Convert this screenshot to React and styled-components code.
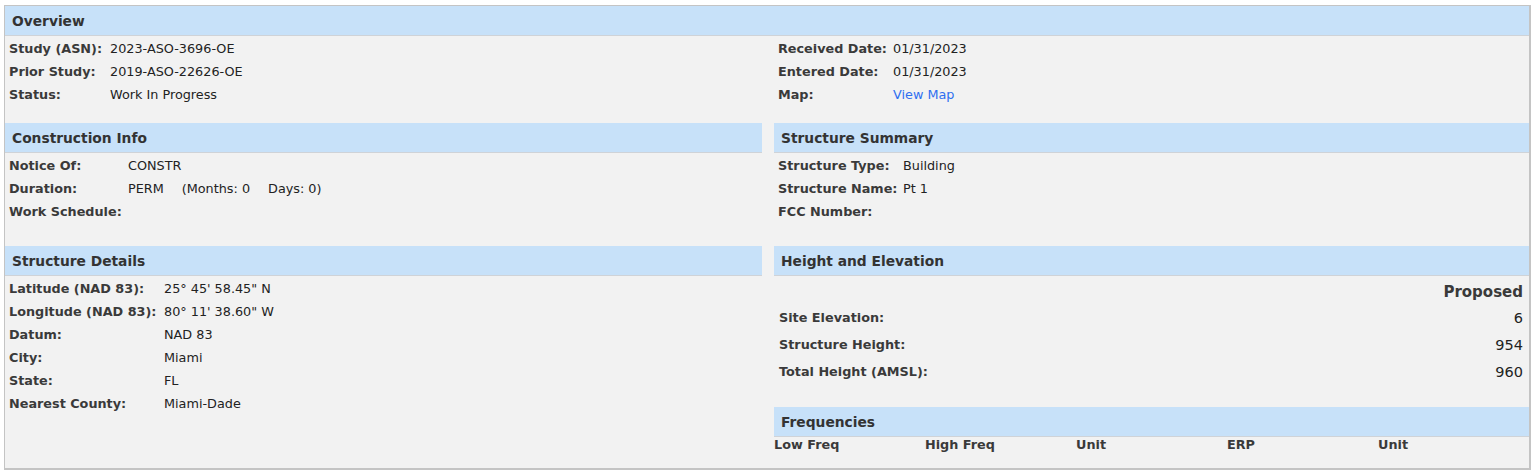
import React from 'react'
import styled, { createGlobalStyle } from 'styled-components'

const GlobalStyle = createGlobalStyle`
  body {
    margin: 0;
    background: #fff;
    font-family: "DejaVu Sans", Verdana, sans-serif;
    font-size: 12.8px;
    color: #222;
  }
`

const Panel = styled.div`
  margin: 5px 5px 0 4px;
  height: 465px;
  box-sizing: border-box;
  border: 1px solid #c4c4c4;
  border-right-width: 2px;
  border-bottom-width: 2px;
  background: #f2f2f2;
`

const Columns = styled.div`
  display: grid;
  grid-template-columns: 757px 1fr;
  column-gap: 12px;
`

const Section = styled.div`
  display: flex;
  flex-direction: column;
`

const Header = styled.div`
  height: 29px;
  line-height: 30px;
  padding-left: 7px;
  background: #c7e1f9;
  border-bottom: 1px solid #cfd3d8;
  font-size: 13.8px;
  font-weight: bold;
  color: #333;
`

const List = styled.div`
  padding: 1px 0 ${p => p.$bottom}px 4px;
`

const Row = styled.div`
  display: grid;
  grid-template-columns: ${p => p.$labelWidth}px 1fr;
  height: 23px;
  align-items: center;
  white-space: nowrap;
`

const Label = styled.span`
  font-weight: bold;
  color: #3a3a3a;
`

const Value = styled.span`
  color: #222;
`

const Spaced = styled.span`
  margin-left: 18px;
`

const MapLink = styled.a`
  color: #2f6ff0;
  text-decoration: none;
`

const HeightTable = styled.div`
  padding: 4px 6px 22px 5px;
`

const ProposedHead = styled.div`
  height: 24px;
  line-height: 24px;
  text-align: right;
  font-size: 15px;
  font-weight: bold;
  color: #3a3a3a;
`

const HeightRow = styled.div`
  display: flex;
  justify-content: space-between;
  align-items: center;
  height: 27px;
`

const HeightValue = styled.span`
  font-size: 14.5px;
  color: #222;
`

const FreqHead = styled.div`
  display: grid;
  grid-template-columns: repeat(5, 1fr);
`

const FreqCol = styled.div`
  font-weight: bold;
  color: #3a3a3a;
  line-height: 16px;
`

const overviewLeft = [
  ['Study (ASN):', '2023-ASO-3696-OE'],
  ['Prior Study:', '2019-ASO-22626-OE'],
  ['Status:', 'Work In Progress'],
]

const overviewRight = [
  ['Received Date:', '01/31/2023'],
  ['Entered Date:', '01/31/2023'],
  ['Map:', <MapLink href="#">View Map</MapLink>],
]

const construction = [
  ['Notice Of:', 'CONSTR'],
  ['Duration:', <>PERM<Spaced>(Months: 0</Spaced><Spaced>Days: 0)</Spaced></>],
  ['Work Schedule:', ''],
]

const summary = [
  ['Structure Type:', 'Building'],
  ['Structure Name:', 'Pt 1'],
  ['FCC Number:', ''],
]

const details = [
  ['Latitude (NAD 83):', '25° 45\' 58.45" N'],
  ['Longitude (NAD 83):', '80° 11\' 38.60" W'],
  ['Datum:', 'NAD 83'],
  ['City:', 'Miami'],
  ['State:', 'FL'],
  ['Nearest County:', 'Miami-Dade'],
]

const heights = [
  ['Site Elevation:', '6'],
  ['Structure Height:', '954'],
  ['Total Height (AMSL):', '960'],
]

const freqCols = ['Low Freq', 'High Freq', 'Unit', 'ERP', 'Unit']

function KeyValues({ rows, labelWidth, bottom = 0 }) {
  return (
    <List $bottom={bottom}>
      {rows.map(([label, value]) => (
        <Row key={label} $labelWidth={labelWidth}>
          <Label>{label}</Label>
          <Value>{value}</Value>
        </Row>
      ))}
    </List>
  )
}

function App() {
  return (
    <>
      <GlobalStyle />
      <Panel>
        <Header>Overview</Header>
        <Columns>
          <KeyValues rows={overviewLeft} labelWidth={101} bottom={17} />
          <KeyValues rows={overviewRight} labelWidth={115} bottom={17} />
        </Columns>

        <Columns>
          <Section>
            <Header>Construction Info</Header>
            <KeyValues rows={construction} labelWidth={119} bottom={23} />
          </Section>
          <Section>
            <Header>Structure Summary</Header>
            <KeyValues rows={summary} labelWidth={125} bottom={23} />
          </Section>
        </Columns>

        <Columns>
          <Section>
            <Header>Structure Details</Header>
            <KeyValues rows={details} labelWidth={155} />
          </Section>
          <Section>
            <Header>Height and Elevation</Header>
            <HeightTable>
              <ProposedHead>Proposed</ProposedHead>
              {heights.map(([label, value]) => (
                <HeightRow key={label}>
                  <Label>{label}</Label>
                  <HeightValue>{value}</HeightValue>
                </HeightRow>
              ))}
            </HeightTable>
            <Header>Frequencies</Header>
            <FreqHead>
              {freqCols.map((c, i) => (
                <FreqCol key={i}>{c}</FreqCol>
              ))}
            </FreqHead>
          </Section>
        </Columns>
      </Panel>
    </>
  )
}

export default App
